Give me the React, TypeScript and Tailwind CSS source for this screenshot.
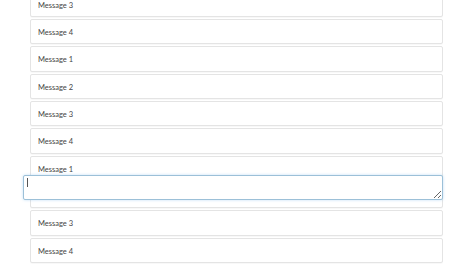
const messages = [
  'Message 3',
  'Message 4',
  'Message 1',
  'Message 2',
  'Message 3',
  'Message 4',
  'Message 1',
  'Message 2',
  'Message 3',
  'Message 4',
]

export default function App() {
  return (
    <div className="h-[264px] overflow-hidden bg-white font-['Lato','Open_Sans',sans-serif] text-[#444]">
      <div className="-mt-[8.3px] flex flex-col gap-[2px] pl-[30px] pr-[31px]">
        {messages.map((msg, i) => (
          <div key={i} className="relative">
            <div className="flex h-[25.33px] items-center rounded-[2px] border border-[#e4e4e4] bg-white px-[7px] pt-[2px] text-[7.5px] shadow-[0_1px_1px_rgba(0,0,0,0.03)]">
              {msg}
            </div>
            {i === 6 && (
              <div className="absolute top-[19.3px] -left-[7px] right-0 z-10">
                <textarea
                  className="block h-[25px] w-full rounded-[2px] border border-[#9cc0d8] bg-white px-[3px] py-[2px] text-[7px] shadow-[0_0_3px_rgba(102,175,233,0.4)] outline-none"
                  defaultValue=""
                />
                <span className="absolute left-[4px] top-[3px] h-[9px] w-px bg-[#555]" />
              </div>
            )}
          </div>
        ))}
      </div>
    </div>
  )
}
